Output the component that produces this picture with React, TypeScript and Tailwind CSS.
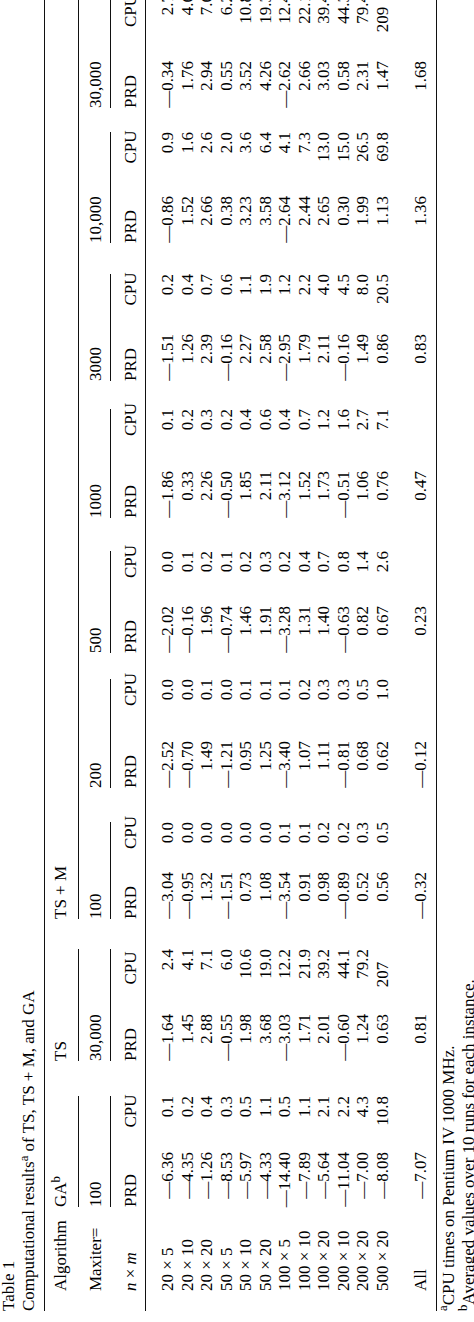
import { Fragment } from 'react';

// column tracks: label, then data columns with gap tracks between them
const TRACKS =
  'grid-cols-[104px_55px_26px_30px_35px_47px_27px_38px_30px_47px_29px_21px_34px_47px_41px_21px_26px_47px_34px_21px_33px_47px_41px_21px_28px_47px_30px_30px_31px_47px_34px_30px_24px_47px_34px_33px]';

const sizes = [
  '20 × 5', '20 × 10', '20 × 20', '50 × 5', '50 × 10', '50 × 20',
  '100 × 5', '100 × 10', '100 × 20', '200 × 10', '200 × 20', '500 × 20',
];

const maxiters = ['100', '30,000', '100', '200', '500', '1000', '3000', '10,000', '30,000'];

type Col = { h: 'PRD' | 'CPU'; v: string[]; all: string };

const cols: Col[] = [
  // GA 100
  { h: 'PRD', v: ['-6.36', '-4.35', '-1.26', '-8.53', '-5.97', '-4.33', '-14.40', '-7.89', '-5.64', '-11.04', '-7.00', '-8.08'], all: '-7.07' },
  { h: 'CPU', v: ['0.1', '0.2', '0.4', '0.3', '0.5', '1.1', '0.5', '1.1', '2.1', '2.2', '4.3', '10.8'], all: '' },
  // TS 30,000
  { h: 'PRD', v: ['-1.64', '1.45', '2.88', '-0.55', '1.98', '3.68', '-3.03', '1.71', '2.01', '-0.60', '1.24', '0.63'], all: '0.81' },
  { h: 'CPU', v: ['2.4', '4.1', '7.1', '6.0', '10.6', '19.0', '12.2', '21.9', '39.2', '44.1', '79.2', '207'], all: '' },
  // TS + M 100
  { h: 'PRD', v: ['-3.04', '-0.95', '1.32', '-1.51', '0.73', '1.08', '-3.54', '0.91', '0.98', '-0.89', '0.52', '0.56'], all: '-0.32' },
  { h: 'CPU', v: ['0.0', '0.0', '0.0', '0.0', '0.0', '0.0', '0.1', '0.1', '0.2', '0.2', '0.3', '0.5'], all: '' },
  // 200
  { h: 'PRD', v: ['-2.52', '-0.70', '1.49', '-1.21', '0.95', '1.25', '-3.40', '1.07', '1.11', '-0.81', '0.68', '0.62'], all: '-0.12' },
  { h: 'CPU', v: ['0.0', '0.0', '0.1', '0.0', '0.1', '0.1', '0.1', '0.2', '0.3', '0.3', '0.5', '1.0'], all: '' },
  // 500
  { h: 'PRD', v: ['-2.02', '-0.16', '1.96', '-0.74', '1.46', '1.91', '-3.28', '1.31', '1.40', '-0.63', '0.82', '0.67'], all: '0.23' },
  { h: 'CPU', v: ['0.0', '0.1', '0.2', '0.1', '0.2', '0.3', '0.2', '0.4', '0.7', '0.8', '1.4', '2.6'], all: '' },
  // 1000
  { h: 'PRD', v: ['-1.86', '0.33', '2.26', '-0.50', '1.85', '2.11', '-3.12', '1.52', '1.73', '-0.51', '1.06', '0.76'], all: '0.47' },
  { h: 'CPU', v: ['0.1', '0.2', '0.3', '0.2', '0.4', '0.6', '0.4', '0.7', '1.2', '1.6', '2.7', '7.1'], all: '' },
  // 3000
  { h: 'PRD', v: ['-1.51', '1.26', '2.39', '-0.16', '2.27', '2.58', '-2.95', '1.79', '2.11', '-0.16', '1.49', '0.86'], all: '0.83' },
  { h: 'CPU', v: ['0.2', '0.4', '0.7', '0.6', '1.1', '1.9', '1.2', '2.2', '4.0', '4.5', '8.0', '20.5'], all: '' },
  // 10,000
  { h: 'PRD', v: ['-0.86', '1.52', '2.66', '0.38', '3.23', '3.58', '-2.64', '2.44', '2.65', '0.30', '1.99', '1.13'], all: '1.36' },
  { h: 'CPU', v: ['0.9', '1.6', '2.6', '2.0', '3.6', '6.4', '4.1', '7.3', '13.0', '15.0', '26.5', '69.8'], all: '' },
  // 30,000
  { h: 'PRD', v: ['-0.34', '1.76', '2.94', '0.55', '3.52', '4.26', '-2.62', '2.66', '3.03', '0.58', '2.31', '1.47'], all: '1.68' },
  { h: 'CPU', v: ['2.7', '4.6', '7.6', '6.2', '10.8', '19.3', '12.4', '22.1', '39.4', '44.3', '79.4', '209'], all: '' },
];

function Num({ value }: { value: string }) {
  if (!value) return null;
  const text = value.replace('-', '—');
  // integers keep the decimal column lined up
  if (!text.includes('.')) {
    return (
      <>
        {text}
        <span className="invisible">.0</span>
      </>
    );
  }
  return <>{text}</>;
}

function DataRow({ label, values }: { label: string; values: string[] }) {
  return (
    <div className={`grid ${TRACKS} leading-[19.5px]`}>
      <div className="whitespace-nowrap pl-[20px]">{label}</div>
      {values.map((v, i) => (
        <Fragment key={i}>
          {i > 0 && <div />}
          <div className="flex justify-end whitespace-nowrap">
            <span>
              <Num value={v} />
            </span>
          </div>
        </Fragment>
      ))}
    </div>
  );
}

export default function App() {
  return (
    <div className="relative h-[1322px] w-[474px] overflow-hidden bg-white">
      <div className="h-[474px] w-[1322px] origin-top-left -rotate-90 translate-y-[1322px] font-['Liberation_Serif',serif] text-[17px] text-black">
        {/* caption */}
        <div className="-mt-[11px] leading-[17px]">Table 1</div>
        <div className="mt-[3px] leading-[18px]">
          Computational results<sup>a</sup> of TS, TS + M, and GA
        </div>

        {/* table */}
        <div className="mt-[6px] border-t border-[#111]">
          <div className={`grid ${TRACKS} h-[34px] leading-[20px]`}>
            <div className="pl-[20px] pt-[6px]">Algorithm</div>
            <div className="col-span-3 border-b border-[#111] pt-[6px]">
              GA<sup>b</sup>
            </div>
            <div />
            <div className="col-span-3 border-b border-[#111] pt-[6px]">TS</div>
            <div />
            <div className="col-span-27 border-b border-[#111] pt-[6px]">TS + M</div>
          </div>

          <div className={`grid ${TRACKS} h-[32px] leading-[20px]`}>
            <div className="pl-[20px] pt-[7px]">Maxiter=</div>
            {maxiters.map((m, i) => (
              <Fragment key={i}>
                {i > 0 && <div />}
                <div className="col-span-3 border-b border-[#111] pt-[7px]">{m}</div>
              </Fragment>
            ))}
          </div>

          <div className={`grid ${TRACKS} h-[35px] border-b border-[#111] leading-[20px]`}>
            <div className="pl-[20px] pt-[10px]">
              <i>n</i> × <i>m</i>
            </div>
            {cols.map((c, i) => (
              <Fragment key={i}>
                {i > 0 && <div />}
                <div
                  className={
                    c.h === 'PRD'
                      ? 'whitespace-nowrap pt-[10px]'
                      : 'flex justify-center whitespace-nowrap pt-[10px]'
                  }
                >
                  {c.h}
                </div>
              </Fragment>
            ))}
          </div>

          <div className="pt-[12px]">
            {sizes.map((s, r) => (
              <DataRow key={s} label={s} values={cols.map((c) => c.v[r])} />
            ))}
          </div>

          <div className="mt-[19px] border-b border-[#111] pb-[5px]">
            <DataRow label="All" values={cols.map((c) => c.all)} />
          </div>
        </div>

        {/* footnotes */}
        <div className="mt-[2px] leading-[20px]">
          <div>
            <sup>a</sup>CPU times on Pentium IV 1000 MHz.
          </div>
          <div>
            <sup>b</sup>Averaged values over 10 runs for each instance.
          </div>
        </div>
      </div>
    </div>
  );
}
